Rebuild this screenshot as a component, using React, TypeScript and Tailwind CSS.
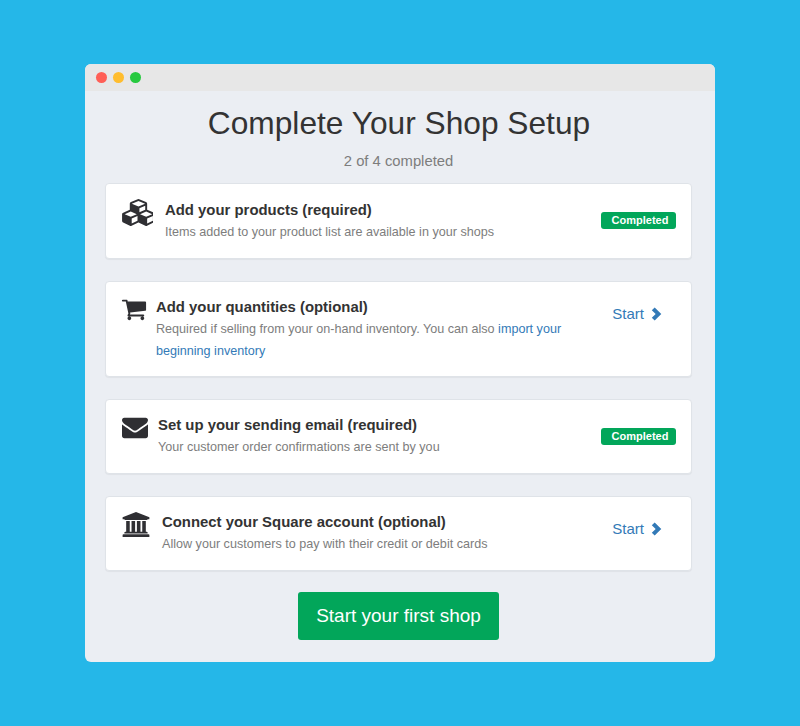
import type { ReactNode } from "react";

function Chevron() {
  return (
    <svg viewBox="0 0 10 14" className="ml-[7px] h-[14px] w-[11px]" fill="#337ab7">
      <path d="M3.2 0.5 L9.8 7 L3.2 13.5 L0.3 10.8 L4.2 7 L0.3 3.2 Z" />
    </svg>
  );
}

function Cubes() {
  return (
    <svg viewBox="0 0 2048 1792" className="mt-[1px] h-[27px] w-[31px]" fill="currentColor">
      <path d="M640 1632l384-192v-314l-384 164v342zm-64-454l404-173-404-173-404 173zm1088 454l384-192v-314l-384 164v342zm-64-454l404-173-404-173-404 173zm-448-293l384-165v-266l-384 164v267zm-64-379l441-189-441-189-441 189zm1088 518v416q0 36-19 67t-52 47l-448 224q-25 14-57 14t-57-14l-448-224q-4-2-7-4-2 2-7 4l-448 224q-25 14-57 14t-57-14l-448-224q-33-16-52-47t-19-67v-416q0-38 21.5-70t56.5-48l434-186v-400q0-38 21.5-70t56.5-48l448-192q23-10 50-10t50 10l448 192q35 16 56.5 48t21.5 70v400l434 186q36 16 57 48t21 70z" />
    </svg>
  );
}

function Cart() {
  return (
    <svg viewBox="0 0 1792 1792" className="-ml-[1px] h-[26px] w-[26px]" fill="currentColor">
      <path d="M704 1536q0 52-38 90t-90 38-90-38-38-90 38-90 90-38 90 38 38 90zm896 0q0 52-38 90t-90 38-90-38-38-90 38-90 90-38 90 38 38 90zm128-1088v512q0 24-16.5 42.5t-40.5 20.5l-1044 122q13 60 13 70 0 16-24 64h920q26 0 45 19t19 45-19 45-45 19h-1024q-26 0-45-19t-19-45q0-11 8-31.5t16-36 21.5-40 15.5-29.5l-177-823h-204q-26 0-45-19t-19-45 19-45 45-19h256q16 0 28.5 6.5t19.5 15.5 13 24.5 8 26 5.5 29.5 4.5 26h1201q26 0 45 19t19 45z" />
    </svg>
  );
}

function Envelope() {
  return (
    <svg viewBox="0 0 1792 1792" className="h-[26px] w-[26px]" fill="currentColor">
      <path d="M1792 710v794q0 66-47 113t-113 47h-1472q-66 0-113-47t-47-113v-794q44 49 101 87 362 246 497 345 57 42 92.5 65.5t94.5 48 110 24.5h2q51 0 110-24.5t94.5-48 92.5-65.5q170-123 498-345 57-39 100-87zm0-294q0 79-49 151t-122 123q-376 261-468 325-10 7-42.5 30.5t-54 38-52 32.5-57.5 27-50 9h-2q-23 0-50-9t-57.5-27-52-32.5-54-38-42.5-30.5q-91-64-262-182.5t-205-142.5q-62-42-117-115.5t-55-136.5q0-78 41.5-130t118.5-52h1472q65 0 112.5 47t47.5 113z" />
    </svg>
  );
}

function Bank() {
  return (
    <svg viewBox="0 0 1920 1792" className="mt-[1px] h-[25px] w-[28px]" fill="currentColor">
      <path d="M960 0l960 384v128h-128q0 26-20.5 45t-48.5 19h-1526q-28 0-48.5-19t-20.5-45h-128v-128zm-704 640h256v768h128v-768h256v768h128v-768h256v768h128v-768h256v768h59q28 0 48.5 19t20.5 45v64h-1664v-64q0-26 20.5-45t48.5-19h59v-768zm1595 960q28 0 48.5 19t20.5 45v128h-1920v-128q0-26 20.5-45t48.5-19h1782z" />
    </svg>
  );
}

function Card(props: { icon: ReactNode; gap: string; top: string; title: string; children: ReactNode; done: boolean; height: string }) {
  return (
    <div className={`flex ${props.height} rounded-[4px] border border-[#dfe3e8] bg-white pl-[16px] pr-[15px] shadow-[0_1px_1px_rgba(0,0,0,0.05)]`}>
      <div className={`${props.gap} pt-[14px] text-[#2f2f33]`}>{props.icon}</div>
      <div className={`flex-1 ${props.top}`}>
        <div className="text-[14.9px] font-bold leading-[20px] text-[#333]">{props.title}</div>
        <div className="mt-[1px] w-[420px] text-[12.6px] leading-[22px] text-[#7d7d7d]">{props.children}</div>
      </div>
      {props.done ? (
        <div className="pt-[28px]">
          <div className="flex h-[17px] w-[75px] items-center justify-center rounded-[3px] bg-[#02a65a] pl-[3px] text-[11px] font-bold text-white">Completed</div>
        </div>
      ) : (
        <div className="flex h-fit items-center pr-[14px] pt-[22px] text-[15px] leading-[20px] text-[#337ab7]">
          Start
          <Chevron />
        </div>
      )}
    </div>
  );
}

export default function App() {
  return (
    <div className="flex min-h-[726px] justify-center bg-[#25b7e8] pt-[64px] font-['Liberation_Sans',Arial,sans-serif]">
      <div className="h-[598px] w-[630px] overflow-hidden rounded-[6px] bg-[#ebeef3]">
        <div className="flex h-[27px] items-center gap-[6px] bg-[#e7e7e7] pl-[11px]">
          <span className="h-[11px] w-[11px] rounded-full bg-[#ff5f56]" />
          <span className="h-[11px] w-[11px] rounded-full bg-[#ffbd2e]" />
          <span className="h-[11px] w-[11px] rounded-full bg-[#27c93f]" />
        </div>
        <div className="pl-[20px] pr-[23px]">
          <h1 className="ml-[1px] mt-[13px] text-center text-[31.7px] font-normal leading-[38px] text-[#333]">Complete Your Shop Setup</h1>
          <p className="mt-[9px] text-center text-[14.8px] leading-[20px] text-[#7d7d7d]">2 of 4 completed</p>
          <div className="mt-[12px] flex flex-col gap-[22px]">
            <Card height="h-[76px]" done top="pt-[16px]" gap="w-[43px]" title="Add your products (required)" icon={<Cubes />}>
              Items added to your product list are available in your shops
            </Card>
            <Card height="h-[96px]" done={false} top="pt-[15px]" gap="w-[34px]" title="Add your quantities (optional)" icon={<Cart />}>
              Required if selling from your on-hand inventory. You can also <span className="text-[#337ab7]">import your beginning inventory</span>
            </Card>
            <Card height="h-[75px]" done top="pt-[15px]" gap="w-[36px]" title="Set up your sending email (required)" icon={<Envelope />}>
              Your customer order confirmations are sent by you
            </Card>
            <Card height="h-[75px]" done={false} top="pt-[15px]" gap="w-[40px]" title="Connect your Square account (optional)" icon={<Bank />}>
              Allow your customers to pay with their credit or debit cards
            </Card>
          </div>
          <div className="mt-[21px] flex justify-center">
            <button className="h-[48px] w-[201px] rounded-[3px] bg-[#02a65a] text-[19px] text-white">Start your first shop</button>
          </div>
        </div>
      </div>
    </div>
  );
}
